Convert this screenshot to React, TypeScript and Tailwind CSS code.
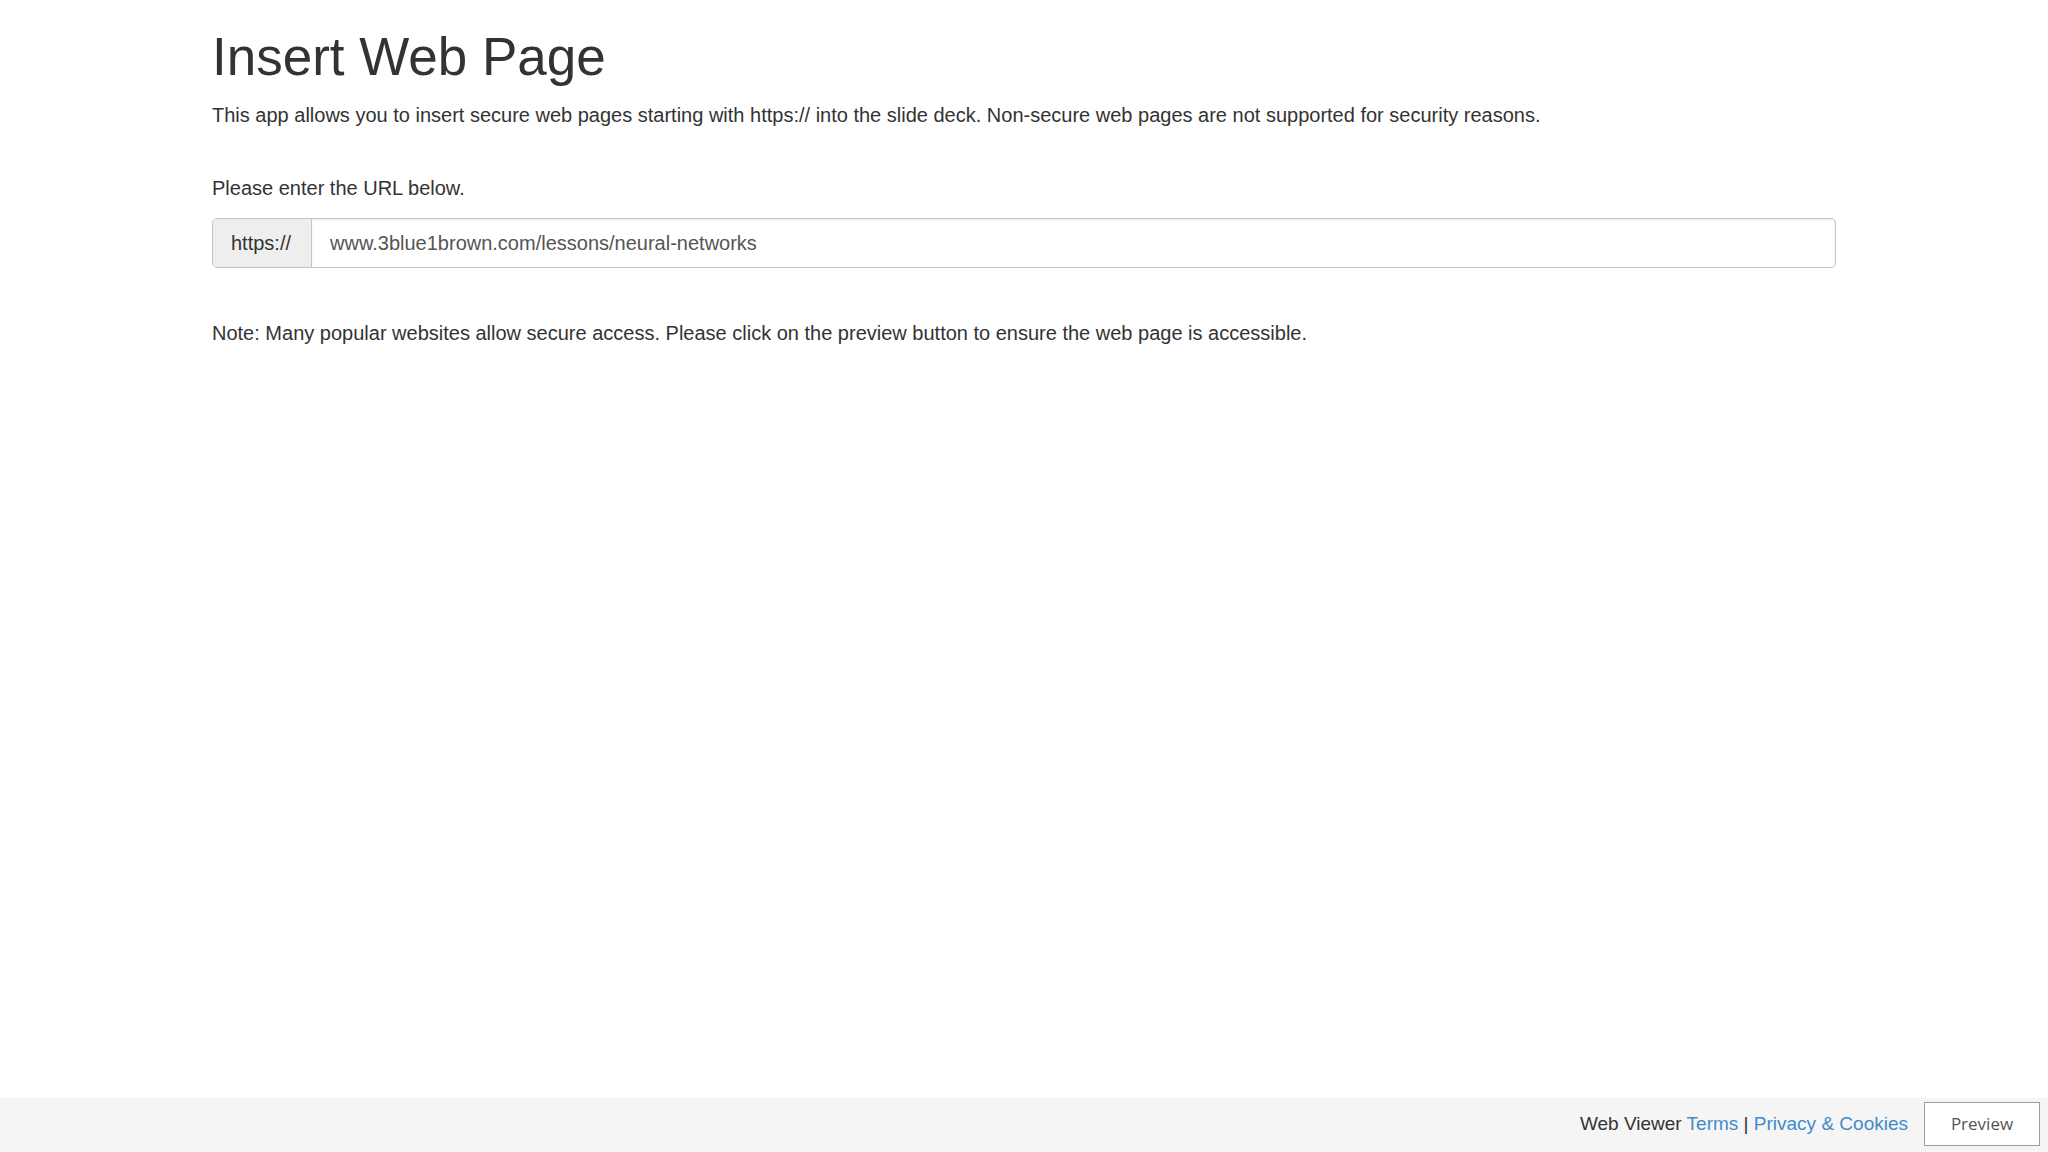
import React, { useState } from 'react';

const App: React.FC = () => {
  const [url, setUrl] = useState('www.3blue1brown.com/lessons/neural-networks');

  return (
    <div className="flex flex-col min-h-screen bg-white text-[20px] leading-[28px] text-[#333333] font-['Liberation_Sans',Arial,sans-serif]">
      <main className="flex-1 px-[212px] pt-[27px]">
        <h1 className="text-[53px] leading-[60px]">Insert Web Page</h1>
        <p className="mt-[14px]">
          This app allows you to insert secure web pages starting with https:// into the slide deck. Non-secure web pages are not supported for security reasons.
        </p>

        <label htmlFor="url" className="block mt-[45px]">Please enter the URL below.</label>
        <div className="flex mt-4 h-[50px] border border-[#c4c4c4] rounded-[5px] overflow-hidden">
          <span className="flex items-center w-[99px] pl-[18px] bg-[#eeeeee] border-r border-[#c4c4c4]">https://</span>
          <input
            id="url"
            type="text"
            value={url}
            onChange={(e) => setUrl(e.target.value)}
            className="flex-1 min-w-0 px-[18px] text-[#555555] outline-none shadow-[inset_0_1px_2px_rgba(0,0,0,0.1)]"
          />
        </div>

        <p className="mt-[51px]">
          Note: Many popular websites allow secure access. Please click on the preview button to ensure the web page is accessible.
        </p>
      </main>

      <footer className="flex items-center justify-end px-2 pt-1 pb-[6px] bg-[#f5f5f5]">
        <p className="mr-4 text-[19px]">
          Web Viewer <a href="#terms" className="text-[#428bca]">Terms</a> | <a href="#privacy" className="text-[#428bca]">Privacy &amp; Cookies</a>
        </p>
        <button
          type="button"
          className="w-[116px] h-[44px] border border-[#9c9c9c] bg-white text-[17px] text-[#555555] font-['Open_Sans',sans-serif]"
        >
          Preview
        </button>
      </footer>
    </div>
  );
};

export default App;
